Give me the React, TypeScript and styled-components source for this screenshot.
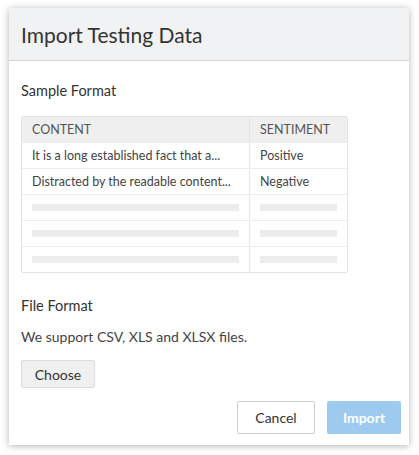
import React from "react";
import styled, { createGlobalStyle } from "styled-components";

const GlobalStyle = createGlobalStyle`
  html, body {
    margin: 0;
    padding: 0;
    background: #ffffff;
  }
  body {
    font-family: Lato, "Open Sans", "Liberation Sans", sans-serif;
    color: #333;
  }
`;

const sampleRows = [
  { content: "It is a long established fact that a...", sentiment: "Positive" },
  { content: "Distracted by the readable content...", sentiment: "Negative" },
];

const App: React.FC = () => {
  return (
    <>
      <GlobalStyle />
      <Page>
        <Dialog>
          <Header>
            <Title>Import Testing Data</Title>
          </Header>
          <Body>
            <SectionTitle>Sample Format</SectionTitle>
            <Table>
              <Row header>
                <Cell>CONTENT</Cell>
                <Cell right>SENTIMENT</Cell>
              </Row>
              {sampleRows.map((row, index) => (
                <Row key={index}>
                  <Cell>{row.content}</Cell>
                  <Cell right>{row.sentiment}</Cell>
                </Row>
              ))}
              {[0, 1, 2].map((i) => (
                <Row key={`p${i}`}>
                  <Cell>
                    <Bar />
                  </Cell>
                  <Cell right>
                    <Bar />
                  </Cell>
                </Row>
              ))}
            </Table>
            <SectionTitle spaced>File Format</SectionTitle>
            <Note>We support CSV, XLS and XLSX files.</Note>
            <ChooseButton>Choose</ChooseButton>
          </Body>
          <Footer>
            <CancelButton>Cancel</CancelButton>
            <ImportButton disabled>Import</ImportButton>
          </Footer>
        </Dialog>
      </Page>
    </>
  );
};

const Page = styled.div`
  padding: 8px 10px 9px 9px;
`;

const Dialog = styled.div`
  width: 400px;
  background: #fff;
  box-shadow: 0 1px 7px rgba(0, 0, 0, 0.3);
  display: flex;
  flex-direction: column;
`;

const Header = styled.div`
  height: 52px;
  background: #f1f2f4;
  border-bottom: 1px solid #d6d7d9;
  display: flex;
  align-items: center;
  padding: 0 12px;
`;

const Title = styled.h1`
  margin: 0;
  font-size: 21px;
  font-weight: 400;
  color: #333;
`;

const Body = styled.div`
  padding: 21px 12px 0;
  display: flex;
  flex-direction: column;
  align-items: flex-start;
`;

const SectionTitle = styled.div<{ spaced?: boolean }>`
  font-size: 14.5px;
  line-height: 18px;
  color: #333;
  margin-top: ${({ spaced }) => (spaced ? "24px" : "0")};
`;

const Table = styled.div`
  margin-top: 16px;
  width: 325px;
  border: 1px solid #e4e4e4;
  border-radius: 2px;
  display: flex;
  flex-direction: column;
`;

const Row = styled.div<{ header?: boolean }>`
  display: grid;
  grid-template-columns: 227px 1fr;
  height: 25px;
  background: ${({ header }) => (header ? "#efefef" : "#fff")};
  color: ${({ header }) => (header ? "#555" : "#444")};
  font-size: 12.5px;
  & + & {
    border-top: 1px solid #ececec;
  }
`;

const Cell = styled.div<{ right?: boolean }>`
  display: flex;
  align-items: center;
  padding: 0 10px;
  white-space: nowrap;
  overflow: hidden;
  border-left: ${({ right }) => (right ? "1px solid #e4e4e4" : "none")};
`;

const Bar = styled.div`
  width: 100%;
  height: 7px;
  background: #ececec;
`;

const Note = styled.div`
  margin-top: 13px;
  font-size: 14px;
  line-height: 18px;
  color: #444;
`;

const ChooseButton = styled.button`
  margin-top: 14px;
  width: 74px;
  height: 28px;
  background: #f0f0f0;
  border: 1px solid #dcdcdc;
  border-radius: 2px;
  font-family: inherit;
  font-size: 14px;
  color: #333;
  padding: 0;
`;

const Footer = styled.div`
  display: flex;
  justify-content: flex-end;
  gap: 12px;
  padding: 13px 8px 11px;
`;

const CancelButton = styled.button`
  width: 78px;
  height: 33px;
  background: #fff;
  border: 1px solid #cfcfcf;
  border-radius: 2px;
  font-family: inherit;
  font-size: 14px;
  color: #333;
  padding: 0;
`;

const ImportButton = styled.button`
  width: 74px;
  height: 33px;
  background: #9dcbef;
  border: none;
  border-radius: 2px;
  font-family: inherit;
  font-size: 14px;
  font-weight: 700;
  color: #fff;
  padding: 0;
`;

export default App;
